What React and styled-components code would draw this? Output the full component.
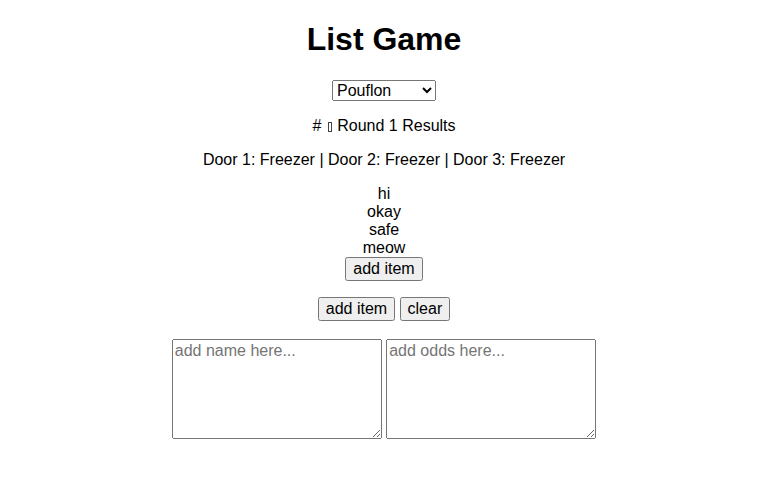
import { useState } from 'react';
import styled, { createGlobalStyle } from 'styled-components';

const GlobalStyle = createGlobalStyle`
	body {
		margin: 0;
		background: #fff;
		color: #000;
		font-family: 'Liberation Sans', Arial, sans-serif;
	}
`;

const Page = styled.div`
	text-align: center;
	font-size: 16px;
`;

const Title = styled.h1`
	font-size: 32px;
	margin: 21.44px 0;
`;

const Picker = styled.select`
	font-family: inherit;
	font-size: 16px;
	width: 104px;
`;

const Line = styled.p`
	margin: 16px 0;
`;

// missing-glyph box that the round header icon falls back to
const Glyph = styled.span`
	display: inline-block;
	width: 2px;
	height: 8px;
	margin: 0 1px 0 2px;
	border: 1px solid #444;
	vertical-align: -1px;
`;

const Items = styled.div`
	margin-top: 16px;
`;

const Item = styled.div``;

const Btn = styled.button`
	font-family: inherit;
	font-size: 16px;
`;

const Controls = styled.div`
	margin: 16px 0 18px;
`;

const Box = styled.textarea`
	font-family: inherit;
	font-size: 16px;
	width: 210px;
	height: 100px;
	box-sizing: border-box;
`;

const App = () => {
	const [items, setItems] = useState(['hi', 'okay', 'safe', 'meow']);
	const doors = ['Freezer', 'Freezer', 'Freezer'];

	return (
		<Page>
			<GlobalStyle />
			<Title>List Game</Title>
			<Picker defaultValue='Pouflon'>
				<option>Pouflon</option>
				<option>Coin</option>
				<option>Doors</option>
			</Picker>
			<Line>
				# <Glyph /> Round 1 Results
			</Line>
			<Line>
				{doors.map((d, i) => `Door ${i + 1}: ${d}`).join(' | ')}
			</Line>
			<Items>
				{items.map((it, i) => (
					<Item key={i}>{it}</Item>
				))}
				<Btn onClick={() => setItems([...items, 'new'])}>add item</Btn>
			</Items>
			<Controls>
				<Btn>add item</Btn> <Btn onClick={() => setItems([])}>clear</Btn>
			</Controls>
			<div>
				<Box placeholder='add name here...' />{' '}
				<Box placeholder='add odds here...' />
			</div>
		</Page>
	);
};

export default App;
